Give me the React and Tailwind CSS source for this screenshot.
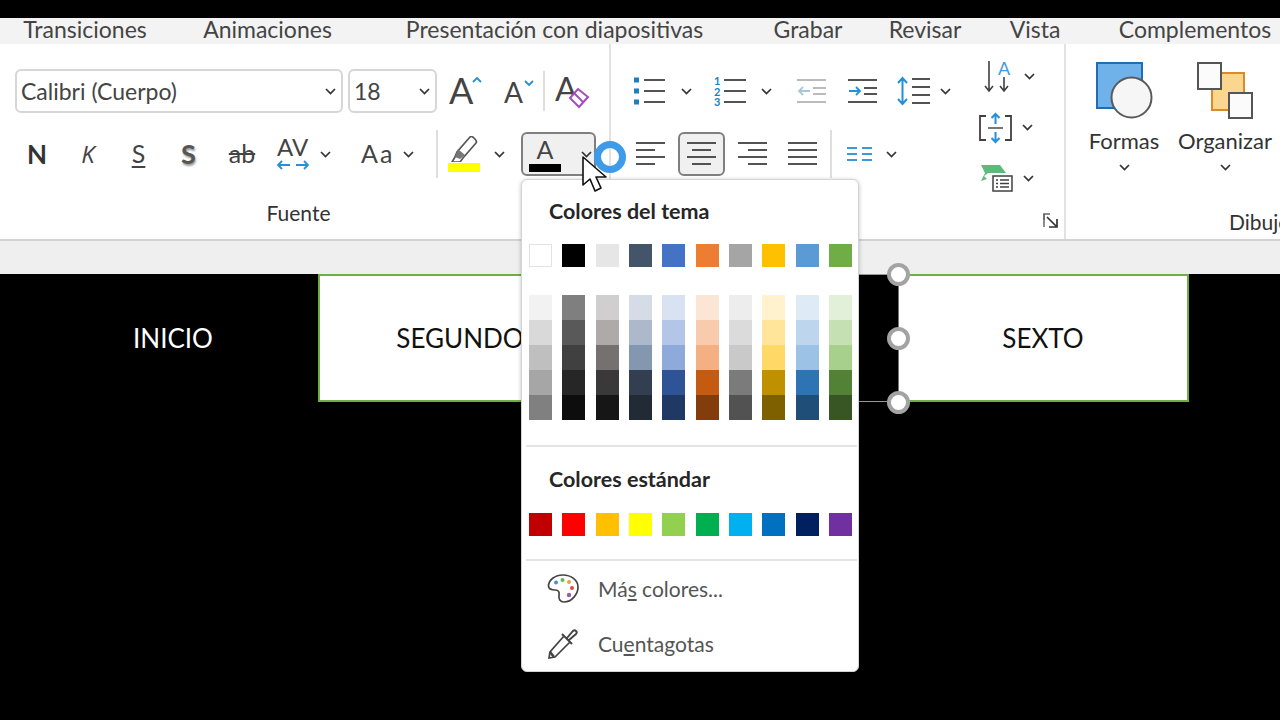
import React from "react";

const FONT = "font-['Lato','Open_Sans',sans-serif]";
const INK = "#404040";
const BLUE = "#2f8fd0";

function Chev({ className = "" }) {
  return (
    <svg width="11" height="7" viewBox="0 0 11 7" className={`shrink-0 ${className}`}>
      <path d="M1 1l4.5 4.5L10 1" fill="none" stroke="#333" strokeWidth="1.7" />
    </svg>
  );
}
function Lines({ w = 30, h = 26, rows, className = "", stroke = INK }) {
  return (
    <svg width={w} height={h} viewBox={`0 0 ${w} ${h}`} className={`shrink-0 ${className}`}>
      {rows.map(([x1, x2, y], i) => (
        <line key={i} x1={x1} x2={x2} y1={y} y2={y} stroke={stroke} strokeWidth="1.8" />
      ))}
    </svg>
  );
}

function Bullets({ className }) {
  return (
    <svg width="31" height="28" viewBox="0 0 31 28" className={`shrink-0 ${className}`}>
      {[3, 14, 25].map((y) => (
        <g key={y}>
          <rect x="0" y={y - 2.5} width="5" height="5" fill="#1c7fc0" />
          <line x1="10" x2="31" y1={y} y2={y} stroke={INK} strokeWidth="1.8" />
        </g>
      ))}
    </svg>
  );
}
function Numbers({ className }) {
  return (
    <svg width="32" height="30" viewBox="0 0 32 30" className={`shrink-0 ${className}`}>
      {["1", "2", "3"].map((t, i) => (
        <text key={t} x="0" y={9 + i * 10.5} fontSize="11" fontWeight="700" fill="#1c7fc0" fontFamily="Lato">{t}</text>
      ))}
      {[4, 15, 26].map((y) => (
        <line key={y} x1="10" x2="32" y1={y} y2={y} stroke={INK} strokeWidth="1.8" />
      ))}
    </svg>
  );
}
function Indent({ dec, className }) {
  const c = dec ? "#b4b4b4" : INK;
  const a = dec ? "#a9c6da" : "#2490d8";
  return (
    <svg width="29" height="26" viewBox="0 0 29 26" className={`shrink-0 ${className}`}>
      <line x1="0" x2="29" y1="2" y2="2" stroke={c} strokeWidth="1.8" />
      <line x1="0" x2="29" y1="24" y2="24" stroke={c} strokeWidth="1.8" />
      <line x1="16" x2="29" y1="10" y2="10" stroke={c} strokeWidth="1.8" />
      <line x1="16" x2="29" y1="16" y2="16" stroke={c} strokeWidth="1.8" />
      {dec ? (
        <path d="M13 13H2M6 9l-4 4 4 4" fill="none" stroke={a} strokeWidth="1.8" />
      ) : (
        <path d="M1 13h11M8 9l4 4-4 4" fill="none" stroke={a} strokeWidth="1.8" />
      )}
    </svg>
  );
}
function LineSpacing({ className }) {
  return (
    <svg width="33" height="32" viewBox="0 0 33 32" className={`shrink-0 ${className}`}>
      <path d="M5.5 3v26M1 8l4.5-5L10 8M1 24l4.5 5 4.5-5" fill="none" stroke="#2490d8" strokeWidth="2" />
      {[4, 12, 20, 28].map((y) => (
        <line key={y} x1="15" x2="33" y1={y} y2={y} stroke={INK} strokeWidth="1.8" />
      ))}
    </svg>
  );
}
function TextDir() {
  return (
    <svg width="28" height="34" viewBox="0 0 28 34" className="shrink-0">
      <path d="M5 1v30M1 26l4 5 4-5" fill="none" stroke={INK} strokeWidth="1.6" />
      <path d="M20 17v14M16 26l4 5 4-5" fill="none" stroke={INK} strokeWidth="1.6" />
      <text x="14" y="15" fontSize="18" fill="#3d9be0" fontFamily="Lato">A</text>
    </svg>
  );
}
function AlignText() {
  return (
    <svg width="33" height="32" viewBox="0 0 33 32" className="shrink-0">
      <path d="M7 4H1v24h6M26 4h6v24h-6" fill="none" stroke={INK} strokeWidth="1.8" />
      <line x1="9" x2="24" y1="16" y2="16" stroke={INK} strokeWidth="1.4" />
      <path d="M16.5 12V2M12.5 6l4-4 4 4M16.5 20v10M12.5 26l4 4 4-4" fill="none" stroke="#2490d8" strokeWidth="2" />
    </svg>
  );
}
function SmartArt() {
  return (
    <svg width="33" height="27" viewBox="0 0 33 27" className="shrink-0">
      <path d="M1 0h19l6 8H8l-4 3 3 3-6 2 4-8z" fill="#5dbb7a" />
      <rect x="13" y="11" width="19" height="15" fill="#fff" stroke={INK} strokeWidth="1.5" />
      <path d="M16 15h2M16 18.5h2M16 22h2M20 15h9M20 18.5h9M20 22h9" stroke={INK} strokeWidth="1.3" />
    </svg>
  );
}
function Launcher() {
  return (
    <svg width="15" height="15" viewBox="0 0 15 15" className="shrink-0">
      <path d="M7 1H1v6" fill="none" stroke="#666" strokeWidth="1.5" transform="translate(0 0)" />
      <path d="M1 1v13" stroke="#666" strokeWidth="1.5" />
      <path d="M4 4l9 9M14 6v8H6" fill="none" stroke="#333" strokeWidth="1.7" />
    </svg>
  );
}
function FormasIcon() {
  return (
    <svg width="57" height="57" viewBox="0 0 57 57">
      <rect x="1" y="1" width="45" height="45" fill="#6fb2ea" stroke="#1f6db3" strokeWidth="2" />
      <circle cx="35.5" cy="35.5" r="20" fill="#f6f6f6" stroke="#5a5a5a" strokeWidth="2" />
    </svg>
  );
}
function OrganizarIcon() {
  return (
    <svg width="57" height="57" viewBox="0 0 57 57">
      <rect x="15" y="11" width="32" height="37" fill="#fbd68e" stroke="#d98a2b" strokeWidth="2" />
      <rect x="1" y="1" width="23" height="26" fill="#fbfbfb" stroke="#555" strokeWidth="2" />
      <rect x="32" y="31" width="23" height="25" fill="#fbfbfb" stroke="#555" strokeWidth="2" />
    </svg>
  );
}
function Palette() {
  return (
    <svg width="34" height="32" viewBox="0 0 34 32" className="shrink-0">
      <path
        d="M16 2C8 2 1.5 7 1.5 13c0 4 4 4 7 4 3 0 4 2 3.5 5-.5 4 1 7 5 7 8 0 14-8 14-15S24 2 16 2z"
        fill="#fff"
        stroke="#444"
        strokeWidth="1.7"
      />
      <circle cx="9" cy="9.5" r="2" fill="#4a90d9" />
      <circle cx="15.5" cy="7" r="2" fill="#5cb85c" />
      <circle cx="22" cy="9" r="2" fill="#f0a030" />
      <circle cx="25" cy="15" r="2" fill="#e0483e" />
      <circle cx="22" cy="22" r="2.2" fill="#9b59b6" />
    </svg>
  );
}
function Dropper() {
  return (
    <svg width="32" height="32" viewBox="0 0 32 32" className="shrink-0">
      <path d="M17 8L3 24l-1 6 6-1L23 14" fill="#fff" stroke="#444" strokeWidth="1.7" />
      <path d="M3 24l4 5" stroke="#444" strokeWidth="2.6" />
      <path d="M15 6l10 10M20 10l6-7c2-2 5 1 3 3l-7 6" fill="none" stroke="#444" strokeWidth="1.9" />
    </svg>
  );
}

const THEME = [
  "bg-[#ffffff] border border-[#e2e2e2]", "bg-[#000000]", "bg-[#e7e6e6]", "bg-[#44546a]", "bg-[#4472c4]",
  "bg-[#ed7d31]", "bg-[#a5a5a5]", "bg-[#ffc000]", "bg-[#5b9bd5]", "bg-[#70ad47]",
];
const SHADES = [
  ["bg-[#f2f2f2]", "bg-[#d9d9d9]", "bg-[#bfbfbf]", "bg-[#a6a6a6]", "bg-[#808080]"],
  ["bg-[#7f7f7f]", "bg-[#595959]", "bg-[#404040]", "bg-[#262626]", "bg-[#0d0d0d]"],
  ["bg-[#d0cece]", "bg-[#aeaaaa]", "bg-[#757171]", "bg-[#3a3838]", "bg-[#161616]"],
  ["bg-[#d6dce5]", "bg-[#adb9ca]", "bg-[#8497b0]", "bg-[#333f50]", "bg-[#222a35]"],
  ["bg-[#d9e2f3]", "bg-[#b4c6e7]", "bg-[#8eaadb]", "bg-[#2f5496]", "bg-[#1f3864]"],
  ["bg-[#fbe5d5]", "bg-[#f7cbac]", "bg-[#f4b083]", "bg-[#c55a11]", "bg-[#833c0b]"],
  ["bg-[#ededed]", "bg-[#dbdbdb]", "bg-[#c9c9c9]", "bg-[#7b7b7b]", "bg-[#525252]"],
  ["bg-[#fff2cc]", "bg-[#fee599]", "bg-[#ffd965]", "bg-[#bf9000]", "bg-[#7f6000]"],
  ["bg-[#deeaf6]", "bg-[#bdd6ee]", "bg-[#9cc3e5]", "bg-[#2e74b5]", "bg-[#1f4e79]"],
  ["bg-[#e2efd9]", "bg-[#c5e0b3]", "bg-[#a8d08d]", "bg-[#538135]", "bg-[#375623]"],
];
const STANDARD = [
  "bg-[#c00000]", "bg-[#ff0000]", "bg-[#ffc000]", "bg-[#ffff00]", "bg-[#92d050]",
  "bg-[#00b050]", "bg-[#00b0f0]", "bg-[#0070c0]", "bg-[#002060]", "bg-[#7030a0]",
];

function ColorPopup() {
  return (
    <div className="absolute left-[521px] top-[179px] z-20 flex h-[493px] w-[338px] flex-col rounded-md border border-[#d4d4d4] bg-white pl-[7px] shadow-[0_1px_4px_rgba(0,0,0,0.25)]">
      <div className="ml-[20px] mt-[16px] h-[30px] text-[21.5px] leading-[30px] font-bold text-[#262626]">Colores del tema</div>
      <div className="mt-[18px] flex w-[323px] justify-between">
        {THEME.map((c, i) => (
          <div key={i} className={`h-[23px] w-[23px] ${c}`} />
        ))}
      </div>
      <div className="mt-[28px] flex w-[323px] justify-between">
        {SHADES.map((col, i) => (
          <div key={i} className="flex w-[23px] flex-col">
            {col.map((c) => (
              <div key={c} className={`h-[25px] ${c}`} />
            ))}
          </div>
        ))}
      </div>
      <div className="ml-[-3px] mt-[25px] h-[2px] w-[331px] bg-[#e4e4e4]" />
      <div className="ml-[20px] mt-[17px] h-[30px] text-[21.5px] leading-[30px] font-bold text-[#262626]">Colores estándar</div>
      <div className="mt-[19px] flex w-[323px] justify-between">
        {STANDARD.map((c, i) => (
          <div key={i} className={`h-[23px] w-[23px] ${c}`} />
        ))}
      </div>
      <div className="ml-[-3px] mt-[23px] h-[2px] w-[331px] bg-[#e4e4e4]" />
      <div className="ml-[18px] mt-[11px] flex h-[34px] items-center text-[21px] text-[#555]">
        <Palette />
        <span className="ml-[17px]">Má<u className="underline-offset-2">s</u> colores...</span>
      </div>
      <div className="ml-[18px] mt-[21px] flex h-[34px] items-center text-[21px] text-[#555]">
        <Dropper />
        <span className="ml-[19px]">Cu<u className="underline-offset-2">e</u>ntagotas</span>
      </div>
    </div>
  );
}

function FontGroup() {
  return (
    <div className="flex h-full w-[611px] shrink-0 flex-col border-r-2 border-[#e2e2e2] pl-[15px] pt-[25px]">
      <div className="flex h-[44px] items-center">
        <div className="flex h-[44px] w-[328px] items-center justify-between rounded-md border-2 border-[#d6d6d6] pl-[4px] pr-[5px] text-[23px] text-[#444]">
          Calibri (Cuerpo)<Chev />
        </div>
        <div className="ml-[5px] flex h-[44px] w-[89px] items-center justify-between rounded-md border-2 border-[#d6d6d6] pl-[4px] pr-[5px] text-[23px] text-[#444]">
          18<Chev />
        </div>
        <svg width="34" height="36" viewBox="0 0 34 36" className="ml-[12px] shrink-0">
          <text x="0" y="31" fontSize="36" fill="#444" fontFamily="Lato">A</text>
          <path d="M24 9l4-4 4 4" fill="none" stroke="#2490d8" strokeWidth="1.8" />
        </svg>
        <svg width="32" height="30" viewBox="0 0 32 30" className="ml-[21px] shrink-0">
          <text x="0" y="27" fontSize="28" fill="#444" fontFamily="Lato">A</text>
          <path d="M21 5l4 4 4-4" fill="none" stroke="#2490d8" strokeWidth="1.8" />
        </svg>
        <div className="ml-[7px] h-[40px] w-[2px] bg-[#dedede]" />
        <svg width="36" height="36" viewBox="0 0 36 36" className="ml-[10px] shrink-0">
          <text x="0" y="28" fontSize="33" fill="#444" fontFamily="Lato">A</text>
          <path d="M23 16l10 8-9 10-9-9z" fill="#fff" stroke="#a44bc0" strokeWidth="2" />
          <path d="M19 20l9 9" stroke="#a44bc0" strokeWidth="2" />
        </svg>
      </div>
      <div className="mt-[19px] flex h-[44px] items-center text-[#444]">
        <span className="ml-[11px] w-[22px] text-center text-[26px] font-bold text-[#333]">N</span>
        <span className="ml-[31px] w-[18px] text-center font-['Open_Sans'] text-[24px] italic">K</span>
        <span className="ml-[33px] w-[17px] text-center text-[25px] underline underline-offset-[3px]">S</span>
        <span className="ml-[33px] w-[17px] text-center text-[27px] font-bold text-[#555] [text-shadow:1px_2px_2px_#999]">S</span>
        <span className="ml-[29px] w-[32px] text-center text-[25px] line-through">ab</span>
        <svg width="32" height="34" viewBox="0 0 32 34" className="ml-[19px] shrink-0">
          <text x="0" y="19" fontSize="24" fill="#444" fontFamily="Lato">AV</text>
          <path d="M1 28h12M5 24l-4 4 4 4M19 28h12M27 24l4 4-4 4" fill="none" stroke="#2490d8" strokeWidth="1.8" />
        </svg>
        <Chev className="ml-[11px]" />
        <span className="ml-[30px] w-[32px] text-center text-[25px] tracking-[2px]">Aa</span>
        <Chev className="ml-[10px]" />
        <div className="ml-[22px] h-[48px] w-[2px] bg-[#dedede]" />
        <div className="ml-[10px] flex w-[33px] shrink-0 flex-col">
          <svg width="33" height="26" viewBox="0 0 33 26">
            <path d="M7 21l-3 5h8l3-4 13-15c2-2-4-8-6-6L9 16z" fill="#fff" stroke="#555" strokeWidth="1.7" />
            <path d="M7 21l3-8 7 6-5 4z" fill="#777" />
          </svg>
          <div className="mt-[1px] h-[9px] w-[32px] bg-[#ffff00]" />
        </div>
        <Chev className="ml-[13px]" />
        <div className="ml-[16px] flex h-[44px] w-[75px] items-center rounded-md border-2 border-[#7f7f7f] bg-[#f0f0f0] pl-[6px]">
          <div className="flex w-[32px] flex-col items-center">
            <span className="h-[25px] text-[25px] leading-[25px]">A</span>
            <div className="mt-[2px] h-[8px] w-[32px] bg-black" />
          </div>
          <Chev className="ml-[20px]" />
        </div>
      </div>
      <div className="mt-[25px] h-[24px] w-[580px] pr-[13px] text-center text-[21px] leading-[24px] text-[#333]">Fuente</div>
    </div>
  );
}

function ParagraphGroup() {
  return (
    <div className="flex h-full w-[455px] shrink-0 border-r-2 border-[#e2e2e2]">
      <div className="flex w-[350px] shrink-0 flex-col pt-[25px]">
        <div className="flex h-[44px] items-center">
          <Bullets className="ml-[23px]" />
          <Chev className="ml-[16px]" />
          <Numbers className="ml-[22px]" />
          <Chev className="ml-[15px]" />
          <Indent dec className="ml-[25px]" />
          <Indent className="ml-[22px]" />
          <LineSpacing className="ml-[20px]" />
          <Chev className="ml-[10px]" />
        </div>
        <div className="mt-[19px] flex h-[44px] items-center">
          <Lines className="ml-[25px]" w={29} rows={[[0, 29, 2], [0, 19, 9], [0, 29, 16], [0, 19, 23]]} />
          <div className="ml-[13px] flex h-[44px] w-[47px] items-center justify-center rounded-md border-2 border-[#7f7f7f] bg-[#f0f0f0]">
            <Lines w={29} rows={[[0, 29, 2], [5, 24, 9], [0, 29, 16], [5, 24, 23]]} />
          </div>
          <Lines className="ml-[13px]" w={29} rows={[[0, 29, 2], [10, 29, 9], [0, 29, 16], [10, 29, 23]]} />
          <Lines className="ml-[21px]" w={29} rows={[[0, 29, 2], [0, 29, 9], [0, 29, 16], [0, 29, 23]]} />
          <div className="ml-[13px] h-[48px] w-[2px] bg-[#dedede]" />
          <Lines className="ml-[15px]" w={25} h={16} stroke="#2490d8" rows={[[0, 10, 2], [15, 25, 2], [0, 10, 8], [15, 25, 8], [0, 10, 14], [15, 25, 14]]} />
          <Chev className="ml-[14px]" />
        </div>
      </div>
      <div className="flex flex-1 flex-col pt-[7px]">
        <div className="flex h-[51px] items-center pl-[23px]"><TextDir /><Chev className="ml-[12px]" /></div>
        <div className="flex h-[51px] items-center pl-[18px]"><AlignText /><Chev className="ml-[10px]" /></div>
        <div className="flex h-[51px] items-center pl-[19px]"><SmartArt /><Chev className="ml-[10px]" /></div>
        <div className="mr-[6px] mt-[9px] self-end"><Launcher /></div>
      </div>
    </div>
  );
}

function DrawGroup() {
  return (
    <div className="flex h-full min-w-0 flex-1 flex-col overflow-hidden text-[#333]">
      <div className="flex h-[166px] pt-[18px]">
        <div className="ml-[4px] flex w-[108px] shrink-0 flex-col items-center">
          <FormasIcon />
          <span className="mt-[8px] h-[28px] text-[22px] leading-[28px]">Formas</span>
          <Chev className="mt-[9px]" />
        </div>
        <div className="flex w-[94px] shrink-0 flex-col items-center">
          <OrganizarIcon />
          <span className="mt-[8px] h-[28px] whitespace-nowrap text-[22px] leading-[28px]">Organizar</span>
          <Chev className="mt-[9px]" />
        </div>
      </div>
      <div className="ml-[163px] h-[24px] text-[21px] leading-[24px]">Dibujo</div>
    </div>
  );
}

export default function App() {
  const tabs = [
    ["w-[134px] ml-[18px]", "Transiciones"],
    ["w-[141px] ml-[45px]", "Animaciones"],
    ["w-[335px] ml-[49px]", "Presentación con diapositivas"],
    ["w-[76px] ml-[48px]", "Grabar"],
    ["w-[78px] ml-[40px]", "Revisar"],
    ["w-[54px] ml-[44px]", "Vista"],
    ["w-[180px] ml-[43px]", "Complementos"],
  ];
  return (
    <div className={`relative h-[720px] w-[1280px] overflow-hidden bg-black ${FONT}`}>
      <div className="h-[18px] bg-black" />
      <div className="flex h-[26px] items-end overflow-hidden bg-[#f3f3f3] pb-[3px] text-[#444]">
        {tabs.map(([c, t]) => (
          <span key={t} className={`shrink-0 whitespace-nowrap text-center text-[23px] leading-[23px] ${c}`}>{t}</span>
        ))}
      </div>
      <div className="flex h-[197px] border-b-2 border-[#d2d2d2] bg-white">
        <FontGroup />
        <ParagraphGroup />
        <DrawGroup />
      </div>
      <div className="h-[33px] bg-[#efefef]" />
      <div className="relative flex h-[128px] text-[26px]">
        <div className="flex w-[318px] items-center justify-center pl-[28px] text-white">INICIO</div>
        <div className="flex w-[284px] items-center justify-center border-2 border-[#70ad47] bg-white text-[#111]">SEGUNDO</div>
        <div className="w-[296px] border-y border-[#999] bg-black" />
        <div className="flex w-[291px] items-center justify-center border-2 border-l border-[#70ad47] border-l-[#777] bg-white text-[#111]">SEXTO</div>
      </div>

      <ColorPopup />

      {/* selection handles */}
      <div className="absolute left-[887px] top-[263px] z-10 h-[23px] w-[23px] rounded-full border-4 border-[#a3a3a3] bg-white" />
      <div className="absolute left-[887px] top-[327px] z-10 h-[23px] w-[23px] rounded-full border-4 border-[#a3a3a3] bg-white" />
      <div className="absolute left-[887px] top-[391px] z-10 h-[23px] w-[23px] rounded-full border-4 border-[#a3a3a3] bg-white" />

      {/* recording click highlight and pointer */}
      <div className="absolute left-[594px] top-[141px] z-30 h-[32px] w-[32px] rounded-full border-[7px] border-[#3d9be9]" />
      <svg width="28" height="38" viewBox="0 0 28 38" className="absolute left-[581px] top-[156px] z-30">
        <path d="M2 1v28l7-6 5 12 6-3-5-11h10z" fill="#fff" stroke="#111" strokeWidth="1.6" strokeLinejoin="round" />
      </svg>
    </div>
  );
}
